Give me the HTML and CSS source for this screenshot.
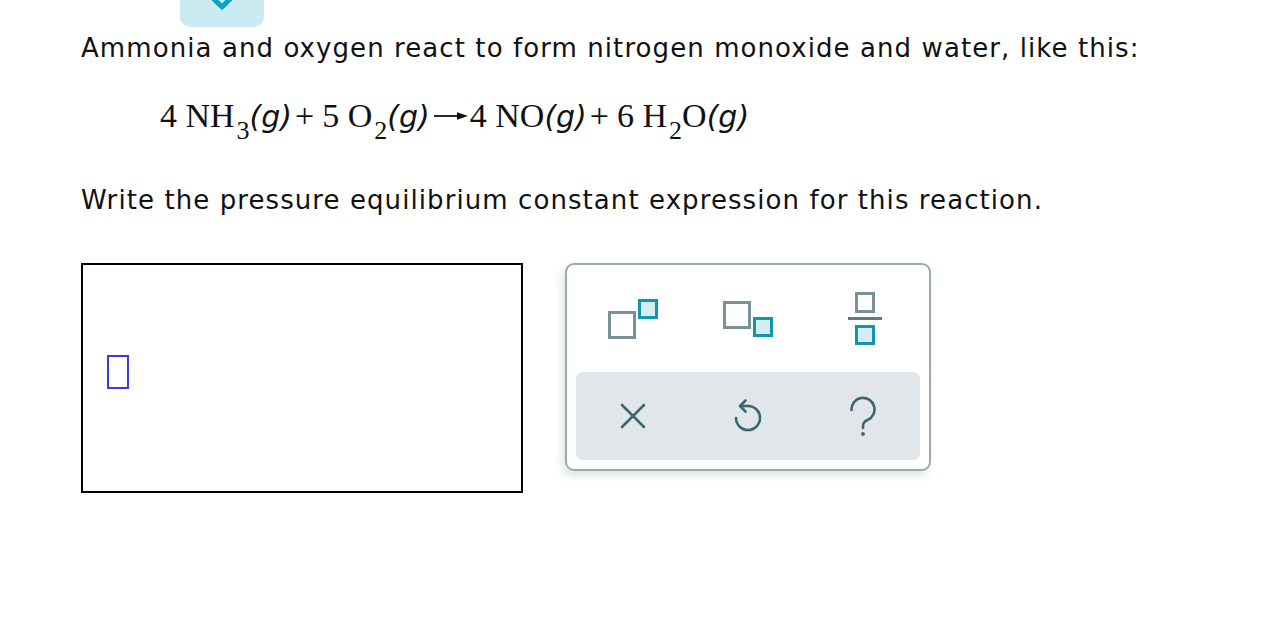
FILE: index.html
```html
<!DOCTYPE html>
<html lang="en">
<head>
<meta charset="utf-8">
<title>Pressure equilibrium constant</title>
<link rel="stylesheet" href="styles.css">
</head>
<body>
<div class="page">
  <div class="tab">
    <svg class="chevron" width="30" height="12" viewBox="0 0 30 12"><polyline points="3,-5 15,7 27,-5" fill="none" stroke="#10a2be" stroke-width="5" stroke-linecap="round" stroke-linejoin="round"/></svg>
  </div>
  <p class="prompt first">Ammonia and oxygen react to form nitrogen monoxide and water, like this:</p>
  <div class="equation">4 NH<sub>3</sub><span class="phase">(g)</span><span class="op">+</span>5 O<sub>2</sub><span class="phase">(g)</span><svg class="arrow" width="34" height="10" viewBox="0 0 34 10"><line x1="0" y1="5" x2="26" y2="5" stroke="#111" stroke-width="1.8"/><polygon points="23,1.2 34,5 23,8.8" fill="#111"/></svg>4 NO<span class="phase">(g)</span><span class="op">+</span>6 H<sub>2</sub>O<span class="phase">(g)</span></div>
  <p class="prompt second">Write the pressure equilibrium constant expression for this reaction.</p>
  <div class="answer-row">
    <div class="answer-box"><span class="cursor"></span></div>
    <div class="palette">
      <div class="palette-top">
        <button class="tool" type="button" aria-label="superscript">
          <svg width="50" height="40" viewBox="0 0 50 40"><rect x="1.5" y="13.5" width="25" height="25" fill="none" stroke="#7a9197" stroke-width="3"/><rect x="31.5" y="1.5" width="17" height="17" fill="#d3eef2" stroke="#1396ad" stroke-width="3"/></svg>
        </button>
        <button class="tool" type="button" aria-label="subscript">
          <svg width="50" height="36" viewBox="0 0 50 36"><rect x="1.5" y="1.5" width="25" height="25" fill="none" stroke="#7a9197" stroke-width="3"/><rect x="31.5" y="17.5" width="17" height="17" fill="#d3eef2" stroke="#1396ad" stroke-width="3"/></svg>
        </button>
        <button class="tool frac" type="button" aria-label="fraction">
          <svg width="34" height="53" viewBox="0 0 34 53"><rect x="8.5" y="1.5" width="17" height="18" fill="none" stroke="#7a9197" stroke-width="3"/><line x1="0" y1="26.5" x2="34" y2="26.5" stroke="#5e7a82" stroke-width="3"/><rect x="8.5" y="34.5" width="17" height="17" fill="#d3eef2" stroke="#1396ad" stroke-width="3"/></svg>
        </button>
      </div>
      <div class="palette-bottom">
        <button class="tool" type="button" aria-label="clear">
          <svg width="26" height="26" viewBox="0 0 26 26"><path d="M2 2 L24 24 M24 2 L2 24" stroke="#3d6671" stroke-width="2.6" fill="none" stroke-linecap="round"/></svg>
        </button>
        <button class="tool" type="button" aria-label="undo">
          <svg width="30" height="36" viewBox="0 0 30 36"><path d="M15 8 A12 12 0 1 1 3 20" fill="none" stroke="#3d6671" stroke-width="2.6" stroke-linecap="round"/><path d="M15 8 H7 M12.5 2.5 L7 8 L12.5 13.5" fill="none" stroke="#3d6671" stroke-width="2.6" stroke-linecap="round" stroke-linejoin="round"/></svg>
        </button>
        <button class="tool" type="button" aria-label="help">
          <svg width="30" height="40" viewBox="0 0 30 40"><path d="M3.5 14 A11.5 11.5 0 1 1 19.5 24 Q15 26 15 30 V32" fill="none" stroke="#3d6671" stroke-width="2.6" stroke-linecap="round"/><circle cx="15" cy="38" r="1.9" fill="#3d6671"/></svg>
        </button>
      </div>
    </div>
  </div>
</div>
</body>
</html>
```

FILE: styles.css
```css
* { box-sizing: border-box; }
html, body { margin: 0; padding: 0; background: #fff; }
body { width: 1283px; height: 635px; overflow: hidden; color: #111; }

.page { padding-left: 81px; }

.tab {
  margin-left: 99px;
  width: 84px;
  height: 27px;
  background: #c9ebf1;
  border-radius: 0 0 10px 10px;
  display: flex;
  justify-content: center;
  align-items: flex-start;
}
.chevron { display: block; }

.prompt {
  margin: 0;
  font-family: "DejaVu Sans", Verdana, sans-serif;
  font-size: 26px;
  line-height: 30px;
  letter-spacing: 1.08px;
  color: #111;
  white-space: nowrap;
}
.prompt.first { margin-top: 6px; }
.prompt.second { margin-top: 48px; }

.equation {
  margin: 33px 0 0 79px;
  font-family: "Liberation Serif", "Times New Roman", serif;
  font-size: 34px;
  line-height: 40px;
  white-space: nowrap;
  color: #111;
}
.equation sub {
  font-size: 26px;
  line-height: 0;
  vertical-align: -12px;
  margin-left: 2px;
}
.phase {
  font-family: "DejaVu Sans", sans-serif;
  font-style: italic;
  font-size: 30px;
}
.op { margin: 0 8px 0 3px; }
.arrow { display: inline-block; vertical-align: 6px; margin: 0 2px 0 4px; }

.answer-row {
  margin-top: 48px;
  display: flex;
  align-items: flex-start;
  gap: 42px;
}
.answer-box {
  width: 442px;
  height: 230px;
  border: 2px solid #000;
  padding: 90px 0 0 24px;
}
.cursor {
  display: block;
  width: 22px;
  height: 34px;
  border: 2px solid #3a3ae8;
}

.palette {
  width: 366px;
  height: 208px;
  border: 2px solid #9aabb0;
  border-radius: 9px;
  padding: 0 9px 9px;
  background: #fff;
  box-shadow: -3px 5px 9px rgba(90, 110, 120, 0.18);
  display: flex;
  flex-direction: column;
}
.palette-top {
  height: 107px;
  display: grid;
  grid-template-columns: repeat(3, 1fr);
  align-items: center;
}
.palette-bottom {
  height: 88px;
  background: #e1e6ea;
  border-radius: 7px;
  display: grid;
  grid-template-columns: repeat(3, 1fr);
  align-items: center;
}
.tool {
  border: 0;
  background: transparent;
  padding: 0;
  margin: 0;
  display: flex;
  justify-content: center;
  align-items: center;
  height: 100%;
  cursor: pointer;
}
.tool svg { display: block; }
.tool.frac { padding-left: 4px; }
```
